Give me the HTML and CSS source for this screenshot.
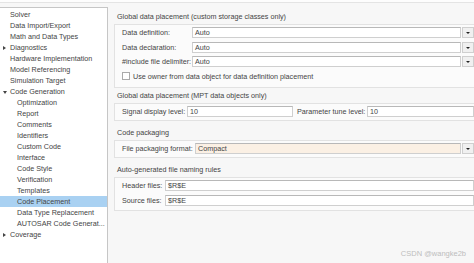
FILE: index.html
```html
<!DOCTYPE html>
<html>
<head>
<meta charset="utf-8">
<link rel="stylesheet" href="styles.css">
</head>
<body>
<div class="app">
  <div class="topstrip"></div>
  <div class="body">
    <ul class="tree">
      <li class="node">Solver</li>
      <li class="node">Data Import/Export</li>
      <li class="node">Math and Data Types</li>
      <li class="node"><span class="arrow closed"></span>Diagnostics</li>
      <li class="node">Hardware Implementation</li>
      <li class="node">Model Referencing</li>
      <li class="node">Simulation Target</li>
      <li class="node"><span class="arrow open"></span>Code Generation</li>
      <li class="node child">Optimization</li>
      <li class="node child">Report</li>
      <li class="node child">Comments</li>
      <li class="node child">Identifiers</li>
      <li class="node child">Custom Code</li>
      <li class="node child">Interface</li>
      <li class="node child">Code Style</li>
      <li class="node child">Verification</li>
      <li class="node child">Templates</li>
      <li class="node child selected">Code Placement</li>
      <li class="node child">Data Type Replacement</li>
      <li class="node child">AUTOSAR Code Generat...</li>
      <li class="node"><span class="arrow closed"></span>Coverage</li>
    </ul>
    <main class="main">
      <section class="section s1">
        <div class="title">Global data placement (custom storage classes only)</div>
        <div class="group g1">
          <div class="row">
            <span class="label w70">Data definition:</span>
            <span class="field">Auto</span>
            <span class="drop"></span>
          </div>
          <div class="row">
            <span class="label w70">Data declaration:</span>
            <span class="field">Auto</span>
            <span class="drop"></span>
          </div>
          <div class="row">
            <span class="label w70">#include file delimiter:</span>
            <span class="field">Auto</span>
            <span class="drop"></span>
          </div>
          <div class="row check">
            <span class="box"></span>
            <span class="label">Use owner from data object for data definition placement</span>
          </div>
        </div>
      </section>
      <section class="section s2">
        <div class="title">Global data placement (MPT data objects only)</div>
        <div class="group g2">
          <div class="row">
            <span class="label w65">Signal display level:</span>
            <span class="field short">10</span>
            <span class="label w74 lpad">Parameter tune level:</span>
            <span class="field">10</span>
          </div>
        </div>
      </section>
      <section class="section s3">
        <div class="title">Code packaging</div>
        <div class="group g3">
          <div class="row">
            <span class="label w73">File packaging format:</span>
            <span class="field peach">Compact</span>
            <span class="drop"></span>
          </div>
        </div>
      </section>
      <section class="section s4">
        <div class="title">Auto-generated file naming rules</div>
        <div class="group g4">
          <div class="row">
            <span class="label w43">Header files:</span>
            <span class="field">$R$E</span>
          </div>
          <div class="row">
            <span class="label w43">Source files:</span>
            <span class="field">$R$E</span>
          </div>
        </div>
      </section>
      <div class="watermark">CSDN @wangke2b</div>
    </main>
  </div>
</div>
</body>
</html>
```

FILE: styles.css
```css
* { box-sizing: border-box; }
html, body {
  margin: 0;
  padding: 0;
  width: 474px;
  height: 263px;
  overflow: hidden;
  background: #f7f7f7;
  font-family: "Liberation Sans", Arial, sans-serif;
  font-size: 7.2px;
  color: #444444;
}
.app {
  display: flex;
  flex-direction: column;
  height: 263px;
}
.topstrip {
  height: 3px;
  background: #fdfdfd;
  border-bottom: 1px solid #e4e4e4;
  flex: none;
}
.body {
  flex: 1;
  display: flex;
  padding-top: 4px;
  min-height: 0;
}
.tree {
  list-style: none;
  margin: 0;
  padding: 1px 0 0 0;
  width: 108px;
  flex: none;
  background: #ffffff;
  border-top: 1px solid #c6c6c6;
  border-right: 1px solid #c6c6c6;
}
.node {
  position: relative;
  height: 11px;
  line-height: 11px;
  padding-left: 10px;
  white-space: nowrap;
}
.node.child { padding-left: 17px; }
.node.selected { background: #a9d1f2; }
.arrow {
  position: absolute;
  left: 3px;
  top: 4px;
  width: 0;
  height: 0;
}
.arrow.closed {
  border-top: 2px solid transparent;
  border-bottom: 2px solid transparent;
  border-left: 3px solid #444;
}
.arrow.open {
  border-left: 2px solid transparent;
  border-right: 2px solid transparent;
  border-top: 3px solid #444;
  top: 5px;
}
.main {
  flex: 1;
  position: relative;
  padding: 4px 0 0 6px;
  overflow: hidden;
}
.s1 { margin-bottom: 2.5px; }
.s2 { margin-bottom: 5.5px; }
.s3 { margin-bottom: 6.5px; }
.title {
  height: 11px;
  line-height: 11px;
  padding-left: 3px;
  margin-bottom: 2px;
  white-space: nowrap;
}
.group {
  width: 364px;
  background: #fbfbfb;
  border: 1px solid #e2e2e2;
  padding: 2px 3px 3px 7px;
  display: flex;
  flex-direction: column;
  gap: 3.5px;
}
.g1 { padding-bottom: 5px; }
.g4 { gap: 4px; padding-bottom: 4px; }
.row {
  display: flex;
  align-items: center;
  height: 11px;
}
.label {
  white-space: nowrap;
  flex: none;
  line-height: 11px;
}
.w70 { width: 70px; }
.w74 { width: 74px; }
.w65 { width: 65px; }
.w73 { width: 73px; }
.w43 { width: 43px; }
.lpad { padding-left: 4px; }
.field {
  flex: 1;
  height: 11px;
  line-height: 9px;
  background: #ffffff;
  border: 1px solid #cfcfcf;
  border-top-color: #b8b8b8;
  padding-left: 2px;
  white-space: nowrap;
}
.field.short { flex: none; width: 106px; }
.field.peach { background: #fbf0e4; }
.drop {
  flex: none;
  width: 12px;
  height: 11px;
  margin-left: 1px;
  background: #f0f0f0;
  border: 1px solid #cfcfcf;
  position: relative;
}
.drop::after {
  content: "";
  position: absolute;
  left: 3px;
  top: 4px;
  border-left: 2px solid transparent;
  border-right: 2px solid transparent;
  border-top: 2px solid #222;
}
.row.check { gap: 3px; }
.box {
  width: 8px;
  height: 8px;
  background: #ffffff;
  border: 1px solid #aaaaaa;
  flex: none;
}
.watermark {
  position: absolute;
  right: 8px;
  bottom: 5px;
  font-size: 7.5px;
  color: #bdbdbd;
}
```
